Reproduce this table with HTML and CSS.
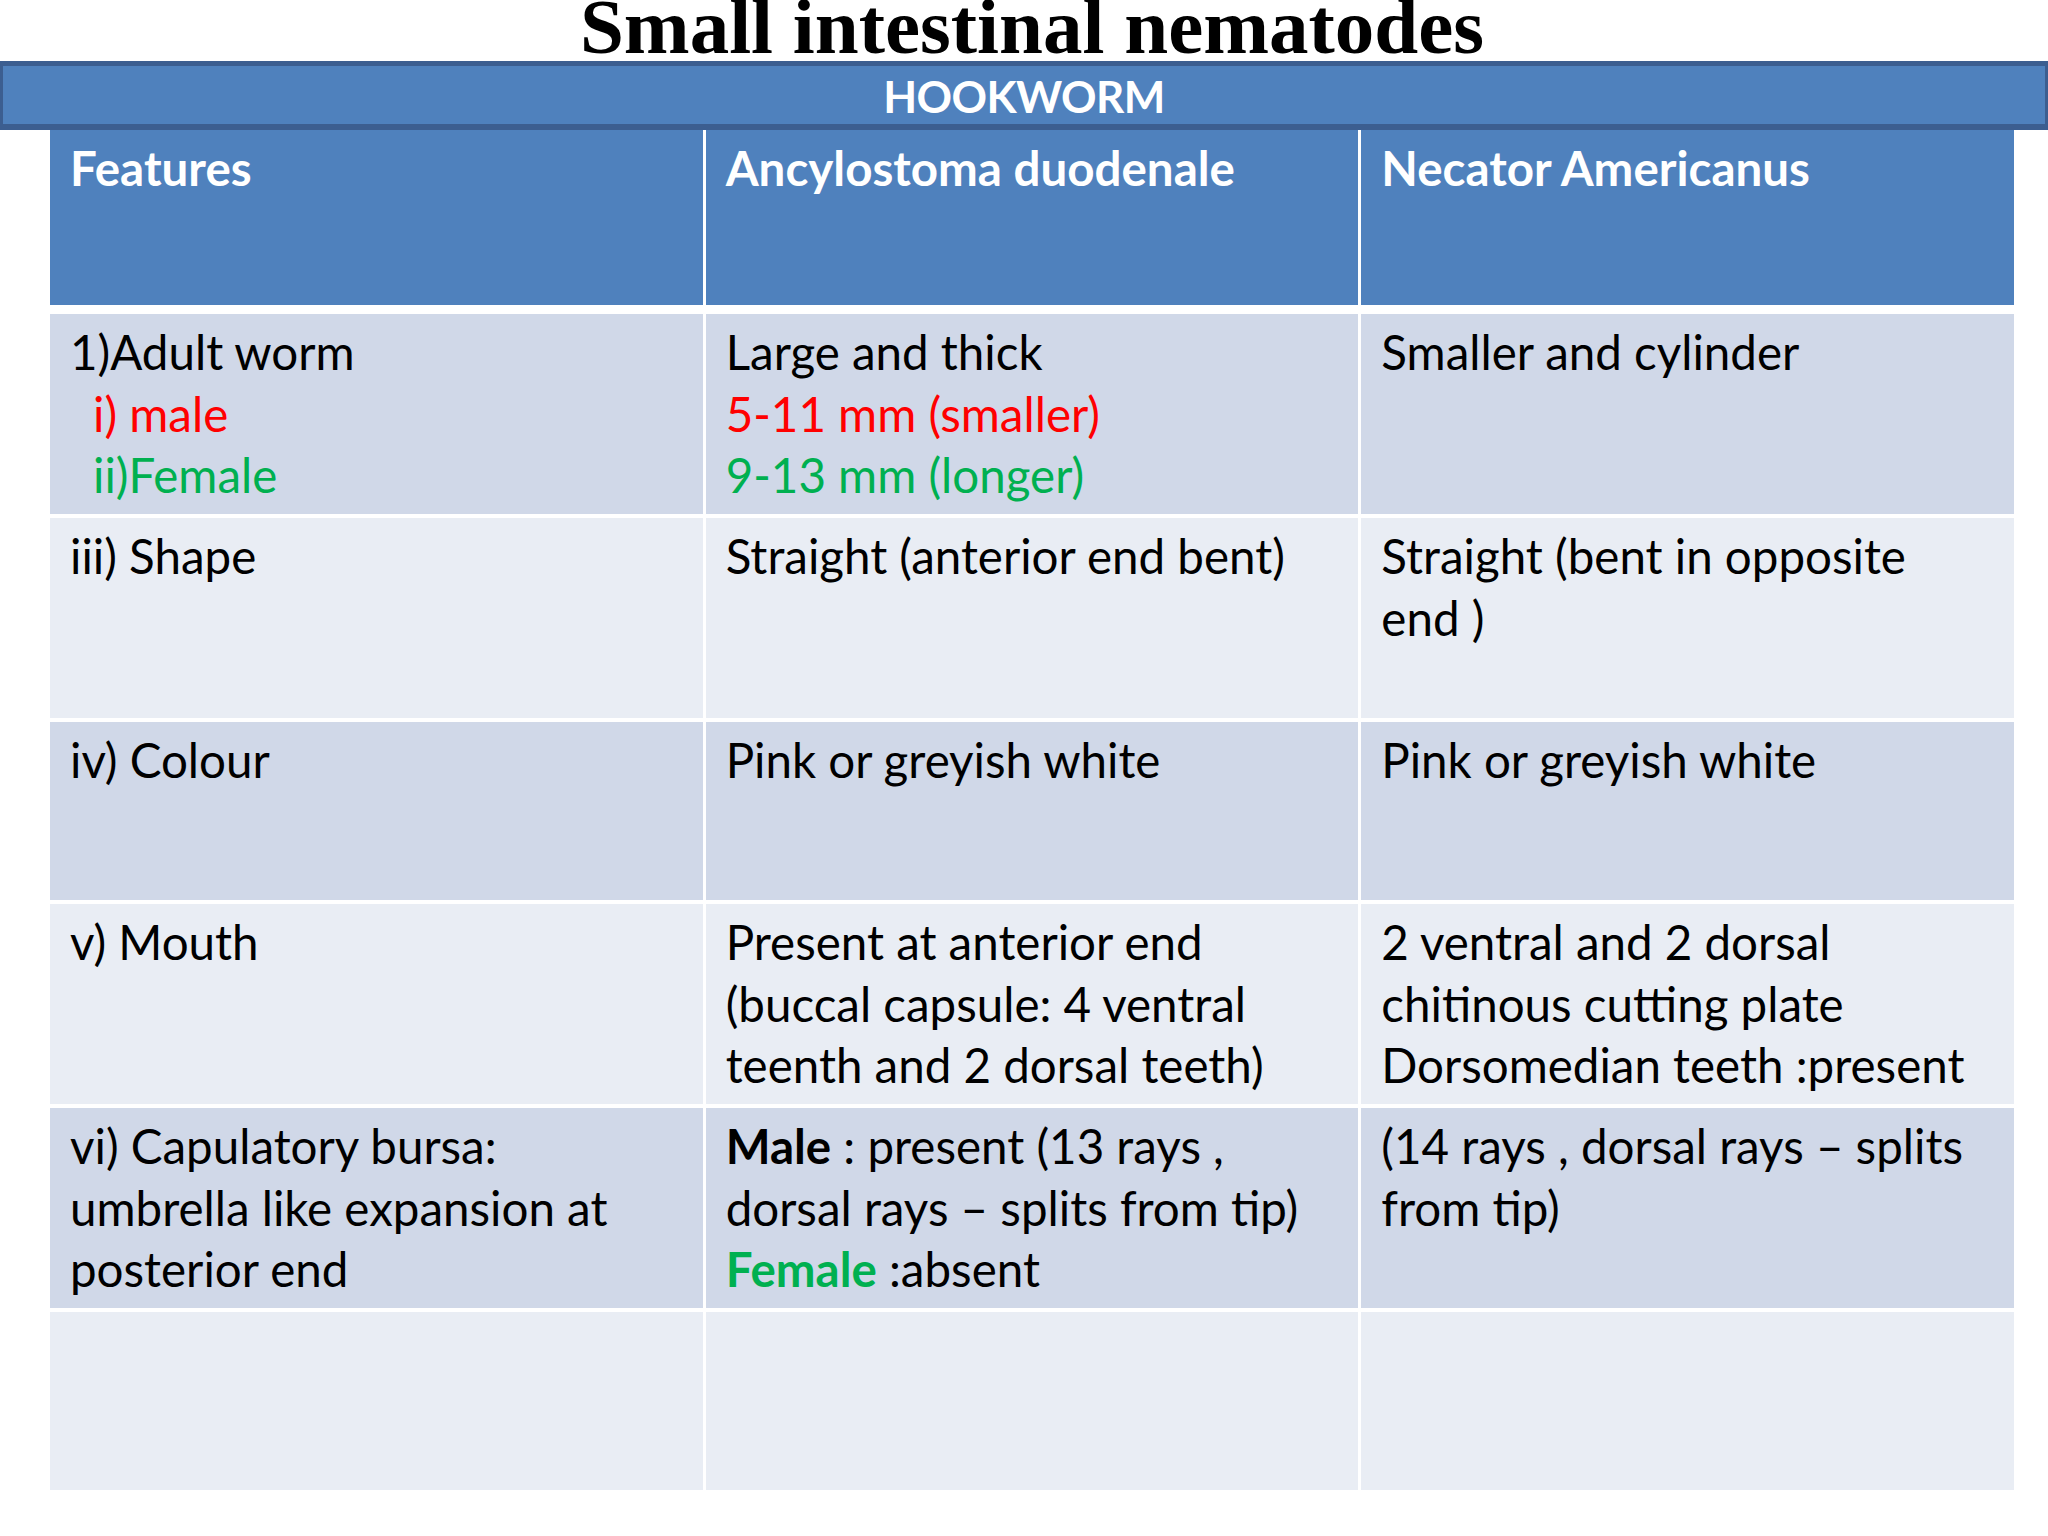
FILE: index.html
```html
<!DOCTYPE html>
<html lang="en">
<head>
<meta charset="utf-8">
<title>Small intestinal nematodes</title>
<link rel="stylesheet" href="styles.css">
</head>
<body>
<div class="slide">
  <h1 class="title">Small intestinal nematodes</h1>
  <div class="band">HOOKWORM</div>
  <div class="table">
    <div class="row head">
      <div class="cell">Features</div>
      <div class="cell">Ancylostoma duodenale</div>
      <div class="cell">Necator Americanus</div>
    </div>
    <div class="row odd tall">
      <div class="cell">1)Adult worm<br><span class="indent red">i) male</span><br><span class="indent green">ii)Female</span></div>
      <div class="cell">Large and thick<br><span class="red">5-11 mm (smaller)</span><br><span class="green">9-13 mm (longer)</span></div>
      <div class="cell">Smaller and cylinder</div>
    </div>
    <div class="row even tall">
      <div class="cell">iii) Shape</div>
      <div class="cell">Straight (anterior end bent)</div>
      <div class="cell">Straight (bent in opposite<br>end )</div>
    </div>
    <div class="row odd short">
      <div class="cell">iv) Colour</div>
      <div class="cell">Pink or greyish white</div>
      <div class="cell">Pink or greyish white</div>
    </div>
    <div class="row even tall">
      <div class="cell">v) Mouth</div>
      <div class="cell">Present at anterior end<br>(buccal capsule: 4 ventral<br>teenth and 2 dorsal teeth)</div>
      <div class="cell">2 ventral and 2 dorsal<br>chitinous cutting plate<br>Dorsomedian teeth :present</div>
    </div>
    <div class="row odd tall">
      <div class="cell">vi) Capulatory bursa:<br>umbrella like expansion at<br>posterior end</div>
      <div class="cell"><b>Male</b> : present (13 rays ,<br>dorsal rays – splits from tip)<br><b class="green">Female</b> :absent</div>
      <div class="cell">(14 rays , dorsal rays – splits<br>from tip)</div>
    </div>
    <div class="row even short">
      <div class="cell"></div>
      <div class="cell"></div>
      <div class="cell"></div>
    </div>
  </div>
</div>
</body>
</html>
```
FILE: styles.css
```css
html, body {
  margin: 0;
  padding: 0;
  background: #ffffff;
}

.slide {
  width: 2048px;
  height: 1536px;
  overflow: hidden;
  background: #ffffff;
  font-family: Lato, "Liberation Sans", sans-serif;
}

.title {
  box-sizing: border-box;
  margin: 0;
  height: 61px;
  padding-left: 16px;
  font-family: "Liberation Serif", "Times New Roman", serif;
  font-weight: 700;
  font-size: 79px;
  line-height: 54px;
  text-align: center;
  color: #000000;
  white-space: nowrap;
}

.band {
  box-sizing: border-box;
  height: 69px;
  background: #4f81bd;
  border: 3px solid #3c5e90;
  border-top-width: 5px;
  border-bottom-width: 6px;
  color: #ffffff;
  font-weight: 700;
  font-size: 44px;
  letter-spacing: -0.6px;
  line-height: 60px;
  text-align: center;
}

.table {
  margin-left: 50px;
  width: 1964px;
  display: flex;
  flex-direction: column;
  gap: 4px;
}

.row {
  display: grid;
  grid-template-columns: repeat(3, 1fr);
  column-gap: 3px;
}

.head {
  height: 175px;
  margin-bottom: 5px;
}

.tall {
  height: 200px;
}

.short {
  height: 178px;
}

.cell {
  box-sizing: border-box;
  padding: 7px 0 0 20px;
  font-size: 47.5px;
  line-height: 61.5px;
  color: #000000;
  white-space: nowrap;
}

.head .cell {
  background: #4f81bd;
  color: #ffffff;
  font-weight: 700;
}

.odd .cell {
  background: #d0d8e8;
}

.even .cell {
  background: #e9edf4;
}

.cell b {
  font-weight: 700;
}

.indent {
  padding-left: 23px;
}

.red {
  color: #ff0000;
}

.green {
  color: #00b050;
}
```
